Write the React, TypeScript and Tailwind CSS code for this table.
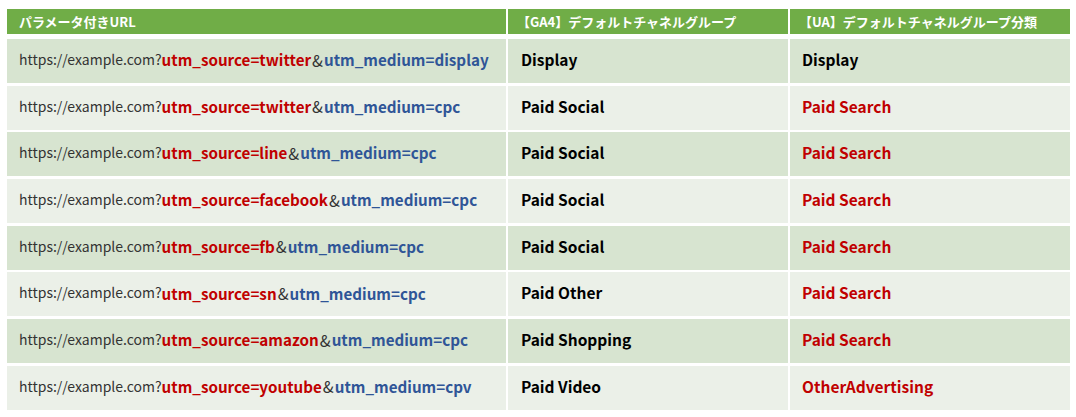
import React from 'react';

type Row = { source: string; medium: string; ga4: string; ua: string; uaRed: boolean };

const rows: Row[] = [
  { source: 'twitter', medium: 'display', ga4: 'Display', ua: 'Display', uaRed: false },
  { source: 'twitter', medium: 'cpc', ga4: 'Paid Social', ua: 'Paid Search', uaRed: true },
  { source: 'line', medium: 'cpc', ga4: 'Paid Social', ua: 'Paid Search', uaRed: true },
  { source: 'facebook', medium: 'cpc', ga4: 'Paid Social', ua: 'Paid Search', uaRed: true },
  { source: 'fb', medium: 'cpc', ga4: 'Paid Social', ua: 'Paid Search', uaRed: true },
  { source: 'sn', medium: 'cpc', ga4: 'Paid Other', ua: 'Paid Search', uaRed: true },
  { source: 'amazon', medium: 'cpc', ga4: 'Paid Shopping', ua: 'Paid Search', uaRed: true },
  { source: 'youtube', medium: 'cpv', ga4: 'Paid Video', ua: 'OtherAdvertising', uaRed: true },
];

const font = "font-['Noto_Sans_CJK_JP',sans-serif]";

export default function App() {
  return (
    <div className={`min-h-screen bg-white pt-[9px] pl-[7px] ${font}`}>
      {/* header */}
      <div className="grid grid-cols-[499px_280px_280px] gap-x-[2px] h-[25px] text-white font-bold text-[13px]">
        <div className="bg-[#70ad47] flex items-center pl-3">パラメータ付きURL</div>
        <div className="bg-[#70ad47] flex items-center pl-[9px]">【GA4】デフォルトチャネルグループ</div>
        <div className="bg-[#70ad47] flex items-center pl-[9px]">【UA】デフォルトチャネルグループ分類</div>
      </div>

      {/* body */}
      <div className="mt-[5px] grid grid-cols-[499px_280px_280px] gap-x-[2px] gap-y-[2.7px]">
        {rows.map((r, i) => {
          const bg = i % 2 === 0 ? 'bg-[#d7e4d0]' : 'bg-[#ebf0e8]';
          return (
            <React.Fragment key={i}>
              <div className={`${bg} h-[44px] flex items-center pl-3 pb-[3px] text-[14px] whitespace-nowrap`}>
                <span className="text-[#333333]">https://example.com?</span>
                <span className="text-[#c00000] font-bold text-[15.2px]">utm_source={r.source}</span>
                <span className="text-[#333333] text-[16px] px-[1px]">&amp;</span>
                <span className="text-[#2f5597] font-bold text-[15.2px]">utm_medium={r.medium}</span>
              </div>
              <div className={`${bg} h-[44px] flex items-center pl-[13px] pb-[3px] text-[15.5px] font-bold text-black`}>
                {r.ga4}
              </div>
              <div
                className={`${bg} h-[44px] flex items-center pl-3 pb-[3px] text-[15.5px] font-bold ${
                  r.uaRed ? 'text-[#c00000]' : 'text-black'
                }`}
              >
                {r.ua}
              </div>
            </React.Fragment>
          );
        })}
      </div>
    </div>
  );
}
